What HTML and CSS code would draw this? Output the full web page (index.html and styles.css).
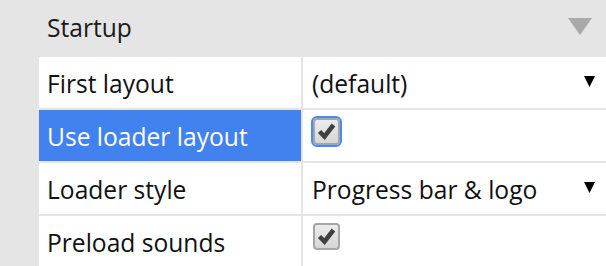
FILE: index.html
```html
<!DOCTYPE html>
<html>
<head>
<meta charset="utf-8">
<link rel="stylesheet" href="styles.css">
</head>
<body>
<div class="panel">
  <div class="header">
    <span class="title">Startup</span>
    <svg class="collapse" width="24" height="17" viewBox="0 0 24 17"><polygon points="0,0 24,0 12,17" fill="#a9a9a9"/></svg>
  </div>
  <div class="grid">
    <div class="cell name">First layout</div>
    <div class="cell value select"><span>(default)</span><svg class="drop" width="11" height="11" viewBox="0 0 11 11"><polygon points="0,0 11,0 5.5,11" fill="#000"/></svg></div>

    <div class="cell name selected">Use loader layout</div>
    <div class="cell value"><span class="check focus"><svg width="23" height="23" viewBox="0 0 23 23"><polyline points="4.5,11.5 9.5,16.5 18.5,5" fill="none" stroke="#404040" stroke-width="4.5" stroke-linejoin="miter"/></svg></span></div>

    <div class="cell name">Loader style</div>
    <div class="cell value select"><span>Progress bar &amp; logo</span><svg class="drop" width="11" height="11" viewBox="0 0 11 11"><polygon points="0,0 11,0 5.5,11" fill="#000"/></svg></div>

    <div class="cell name">Preload sounds</div>
    <div class="cell value"><span class="check"><svg width="23" height="23" viewBox="0 0 23 23"><polyline points="4.5,11.5 9.5,16.5 18.5,5" fill="none" stroke="#404040" stroke-width="4.5" stroke-linejoin="miter"/></svg></span></div>
  </div>
</div>
</body>
</html>
```
FILE: styles.css
```css
html, body {
  margin: 0;
  padding: 0;
  background: #e5e5e5;
  width: 606px;
  height: 266px;
  overflow: hidden;
}
.panel {
  padding-left: 39px;
  font-family: "Open Sans", "Noto Sans", sans-serif;
  font-size: 24.6px;
  color: #111;
}
.header {
  height: 57px;
  display: flex;
  align-items: flex-start;
  justify-content: space-between;
  padding-left: 8px;
  padding-right: 14px;
  box-sizing: border-box;
}
.title {
  line-height: 51px;
  padding-top: 2px;
  color: #1a1a1a;
}
.collapse {
  margin-top: 18px;
}
.grid {
  display: grid;
  grid-template-columns: 262px 303px;
  grid-auto-rows: 51px;
  gap: 2px;
  background: #e5e5e5;
}
.cell {
  background: #fff;
  box-sizing: border-box;
  line-height: 51px;
  padding-top: 1px;
}
.name {
  padding-left: 8px;
}
.name.selected {
  background: #4282ee;
  color: #fff;
}
.value {
  padding-left: 9px;
}
.select {
  display: flex;
  justify-content: space-between;
  padding-right: 11px;
}
.drop {
  margin-top: 18px;
}
.check {
  display: block;
  width: 27px;
  height: 27px;
  box-sizing: border-box;
  margin-top: 6px;
  margin-left: 1px;
  border: 2px solid #a6a6a6;
  border-radius: 4px;
  background: linear-gradient(#ececec, #d6d6d6);
}
.check svg {
  display: block;
}
.check.focus {
  outline: 2px solid #4a8af4;
  outline-offset: 0;
  margin-top: 7px;
}
```
